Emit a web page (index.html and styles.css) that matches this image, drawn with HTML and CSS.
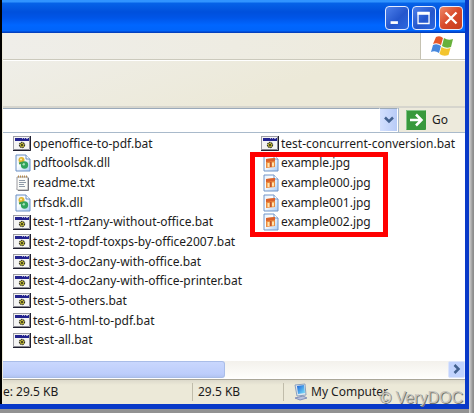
FILE: index.html
```html
<!DOCTYPE html>
<html lang="en">
<head>
<meta charset="utf-8">
<title>Explorer</title>
<link rel="stylesheet" href="styles.css">
</head>
<body>
<svg class="defs" aria-hidden="true">
  <defs>
    <linearGradient id="page" x1="0" y1="0" x2="1" y2="1"><stop offset="0" stop-color="#e4effc"/><stop offset=".4" stop-color="#fff"/><stop offset="1" stop-color="#a9cdf5"/></linearGradient>
    <linearGradient id="screen" x1="0" y1="0" x2="1" y2="1"><stop offset="0" stop-color="#1860d8"/><stop offset="1" stop-color="#7ce4fa"/></linearGradient>
  </defs>
  <symbol id="bat" viewBox="0 0 18 15">
    <rect width="18" height="15" fill="#9c9ca4"/><rect x="1" y="1" width="16" height="13" fill="#f4f4f4"/>
    <path d="M17.500 0V14.500H0" fill="none" stroke="#202030"/><path d="M16.500 1V13.500H1" fill="none" stroke="#8a8a94"/>
    <rect x="2" y="2" width="14" height="3" fill="#23238f"/><path d="M9 2.500h1m1 0h1m1 0h2" stroke="#a8a8d0"/>
    <circle cx="9" cy="9" r="2.500" fill="#d7cf38" stroke="#333326" stroke-width="1.300" stroke-dasharray="1.500 .6"/><circle cx="9" cy="9" r=".9" fill="#111"/>
  </symbol>
  <symbol id="dll" viewBox="0 0 16 18">
    <path d="M1 1h10l4 4v12H1z" fill="url(#page)" stroke="#6a8fc4"/><path d="M11 1v4h4" fill="#fff" stroke="#6a8fc4"/>
    <circle cx="6.500" cy="6" r="3" fill="#e0b52f"/><circle cx="6" cy="5.500" r="1" fill="#fff1b5"/>
    <circle cx="9.500" cy="11" r="3.700" fill="#31a45d"/><circle cx="8.700" cy="10.200" r="1.200" fill="#a7e2bc"/><path d="M4 9.500l4-1" stroke="#3d9c4d" stroke-width="2"/>
  </symbol>
  <symbol id="txt" viewBox="0 0 16 18">
    <path d="M2 3h11v13H3q-2 0-1-2z" fill="#fbfbf8" stroke="#9a9aa0"/><path d="M3 16.500h10.500V4" fill="none" stroke="#77777f"/>
    <path d="M3 2.500h10" stroke="#b58a4c" stroke-width="2" stroke-dasharray="1 1"/>
    <path d="M4 6.500h6M4 8.500h7M4 10.500h5M4 12.500h6" stroke="#8f9aa8"/>
  </symbol>
  <symbol id="jpg" viewBox="0 0 16 18">
    <path d="M1 1h10l4 4v12H1z" fill="url(#page)" stroke="#7095c8"/><path d="M11 1v4h4" fill="#fff" stroke="#7095c8"/>
    <path d="M3 5l9-1v9l-9 1z" fill="#ec8a3c"/><path d="M3 5l9-1v3l-9 1z" fill="#d9602b"/><path d="M4.500 9h2v4h-2zm4.500-.5h2v4H9z" fill="#ffe3ae"/><path d="M7 8h1.500v5H7z" fill="#c0542a"/>
  </symbol>
</svg>
<main class="window">
  <header class="titlebar">
    <button class="cap" aria-label="Minimize"><svg viewBox="0 0 24 24"><path d="M5 17h8" stroke="#fff" stroke-width="3"/></svg></button>
    <button class="cap" aria-label="Maximize"><svg viewBox="0 0 24 24"><path d="M5.500 6h12v12h-12z" fill="none" stroke="#fff" stroke-width="1.400"/><path d="M5 7h13" stroke="#fff" stroke-width="3"/></svg></button>
    <button class="cap close" aria-label="Close"><svg viewBox="0 0 24 24"><path d="M6 6l12 12M18 6L6 18" stroke="#fff" stroke-width="2.600"/></svg></button>
  </header>
  <div class="menubar">
    <div class="logo">
      <svg viewBox="0 0 24 22" width="24" height="22"><path d="M5 2q4-2 7 1l-2 7q-4-3-8-1z" fill="#e6582a"/><path d="M13 3q4 3 9 1l-2 8q-5 2-9-1z" fill="#68b13c"/><path d="M2 10q4-2 8 1l-2 7q-4-3-8-1z" fill="#4587dd"/><path d="M10.500 12q4 3 9 1l-2 7q-5 2-9-1z" fill="#f3c52e"/></svg>
    </div>
  </div>
  <div class="toolbar"></div>
  <form class="address">
    <input class="path" type="text" aria-label="Address">
    <button class="drop" type="button" aria-label="Show addresses"><svg viewBox="0 0 10 8" width="10" height="8"><path d="M1 1.500l4 4 4-4" fill="none" stroke="#42618f" stroke-width="2.500"/></svg></button>
    <button class="go" type="button"><svg viewBox="0 0 20 20" width="20" height="20"><rect width="20" height="20" rx="1" fill="#38993c"/><path d="M.5 19.500V.5h19" fill="none" stroke="#82c486"/><path d="M4 10h11M10 4.500l5.500 5.500-5.500 5.500" fill="none" stroke="#fff" stroke-width="2.500"/></svg>Go</button>
  </form>
  <section class="files">
    <ul class="list">
      <li><svg class="bat"><use href="#bat"/></svg>openoffice-to-pdf.bat</li>
      <li><svg class="doc"><use href="#dll"/></svg>pdftoolsdk.dll</li>
      <li><svg class="doc"><use href="#txt"/></svg>readme.txt</li>
      <li><svg class="doc"><use href="#dll"/></svg>rtfsdk.dll</li>
      <li><svg class="bat"><use href="#bat"/></svg>test-1-rtf2any-without-office.bat</li>
      <li><svg class="bat"><use href="#bat"/></svg>test-2-topdf-toxps-by-office2007.bat</li>
      <li><svg class="bat"><use href="#bat"/></svg>test-3-doc2any-with-office.bat</li>
      <li><svg class="bat"><use href="#bat"/></svg>test-4-doc2any-with-office-printer.bat</li>
      <li><svg class="bat"><use href="#bat"/></svg>test-5-others.bat</li>
      <li><svg class="bat"><use href="#bat"/></svg>test-6-html-to-pdf.bat</li>
      <li><svg class="bat"><use href="#bat"/></svg>test-all.bat</li>
    </ul>
    <ul class="list second">
      <li><svg class="bat"><use href="#bat"/></svg>test-concurrent-conversion.bat</li>
      <li><svg class="doc"><use href="#jpg"/></svg>example.jpg</li>
      <li><svg class="doc"><use href="#jpg"/></svg>example000.jpg</li>
      <li><svg class="doc"><use href="#jpg"/></svg>example001.jpg</li>
      <li><svg class="doc"><use href="#jpg"/></svg>example002.jpg</li>
      <li class="highlight" aria-hidden="true"></li>
    </ul>
  </section>
  <div class="scroll">
    <div class="thumb"></div>
    <button class="right" aria-label="Scroll right"><svg viewBox="0 0 8 10" width="8" height="10"><path d="M1.500 1l4 4-4 4" fill="none" stroke="#42618f" stroke-width="2.500"/></svg></button>
  </div>
  <footer class="status">
    <span class="size">e: 29.5 KB</span>
    <span class="total">29.5 KB</span>
    <span class="place"><svg viewBox="0 0 15 18" width="15" height="18"><path d="M2 2l10-1 1 11-9 1z" fill="#dfe7f0" stroke="#8ba1bd"/><path d="M4 3l7-1 1 8-7 1z" fill="url(#screen)"/><path d="M2 15l8-2 4 2-7 2z" fill="#b6c1dd" stroke="#8490b7"/></svg>My Computer</span>
  </footer>
  <div class="watermark">© VeryDOC</div>
</main>
</body>
</html>
```
FILE: styles.css
```css
* { box-sizing: border-box; }
body {
  margin: 0;
  padding: 0 5px 4px 0;
  background: linear-gradient(90deg, #d8d8d8, #8e8e8e 4px) right / 5px 100% no-repeat, #929292;
  font: 12px/16px "Noto Sans", "Open Sans", sans-serif;
  color: #1c1c1c;
}
.defs { position: absolute; width: 0; height: 0; }
button { padding: 0; border: 0; font: inherit; color: inherit; }
.window {
  position: relative;
  border: solid #0839c8;
  border-width: 0 4px 5px 0;
  background: #ece9d8;
  box-shadow: inset 2px 0 #000;
  padding-left: 3px;
}
.titlebar {
  display: flex;
  justify-content: flex-end;
  gap: 3px;
  height: 33px;
  margin-left: -1px;
  padding: 6px 2px 0 0;
  background: linear-gradient(#3194ff 0 2px, #0663e8 3px, #0050dc 12px, #0055e8 18px, #0066ff 25px, #0064fa 31px, #0340c0 32px);
}
.cap {
  width: 24px;
  height: 24px;
  border: 1px solid #e4ecff;
  border-radius: 4px;
  background: linear-gradient(135deg, #4d80eb, #2456cc 55%, #2c68df);
}
.cap svg { display: block; width: 100%; height: 100%; }
.close { background: linear-gradient(135deg, #ef8868, #d8492a 50%, #c63b1d); }
.menubar {
  display: flex;
  justify-content: flex-end;
  height: 27px;
  background: linear-gradient(90deg, #efeee9, #edeadb);
  border-bottom: 1px solid #cbc9bc;
}
.logo {
  display: grid;
  place-items: center;
  width: 45px;
  border-left: 1px solid #c5c2b2;
  background: #fff;
}
.toolbar {
  height: 48px;
  border-top: 1px solid #fff;
  border-bottom: 2px solid #d6d5cd;
  background: linear-gradient(160deg, #efeee8, #ece9d8 60%);
}
.address {
  display: flex;
  height: 25px;
  border-bottom: 1px solid #a9bacb;
}
.path {
  flex: 1;
  min-width: 0;
  border: solid #9aa9b9;
  border-width: 1px 0 0;
  padding: 0 4px;
  background: #fff;
  font: inherit;
}
.drop {
  width: 19px;
  border: 1px solid #fff;
  border-top-color: #9aa9b9;
  background: linear-gradient(90deg, #d3e0fe, #b8cbf7);
}
.go {
  display: flex;
  align-items: center;
  gap: 6px;
  width: 67px;
  padding-left: 7px;
  border-left: 1px solid #a9bacb;
  background: #edeadc;
}
.files {
  display: grid;
  grid-template-columns: 248px 1fr;
  height: 228px;
  padding: 1px 0 0 10px;
  background: #fff;
}
.list {
  position: relative;
  display: grid;
  grid-template-rows: repeat(11, 1fr);
  height: 216px;
  margin: 0;
  padding: 0;
  list-style: none;
}
.list li {
  display: flex;
  align-items: center;
  gap: 2px;
  white-space: nowrap;
}
.bat { width: 18px; height: 15px; }
.doc { width: 16px; height: 18px; margin-left: 2px; }
.list .highlight {
  position: absolute;
  top: 18px;
  left: -11px;
  width: 138px;
  height: 85px;
  border: 5px solid #f00;
}
.scroll {
  display: flex;
  justify-content: space-between;
  height: 18px;
  border-bottom: 1px solid #fff;
  background: linear-gradient(#f3f1ec, #fefefb);
}
.thumb {
  width: 222px;
  border: 1px solid #a9bde8;
  border-left: 0;
  border-radius: 0 3px 3px 0;
  background: linear-gradient(#c9d7fd, #bccdfb 80%, #b2c4f0);
}
.right {
  width: 17px;
  border: 1px solid #dce5fb;
  border-radius: 2px;
  background: #c1d3fd;
}
.status {
  display: flex;
  align-items: center;
  height: 25px;
  border-top: 1px solid #aaa798;
  background: linear-gradient(#dcd9cb, #ece9d8 5px);
}
.size { width: 189px; }
.total { width: 91px; }
.status .total, .status .place {
  padding-left: 5px;
  border-left: 1px solid #c0bcaa;
  line-height: 18px;
}
.status .place {
  display: flex;
  gap: 3px;
  padding-left: 9px;
}
.watermark {
  position: absolute;
  right: 2px;
  bottom: -3px;
  font: 16px/18px "Liberation Sans", sans-serif;
  color: #c5c4bd;
  text-shadow: 1px 1px 0 #77776f;
}
```
